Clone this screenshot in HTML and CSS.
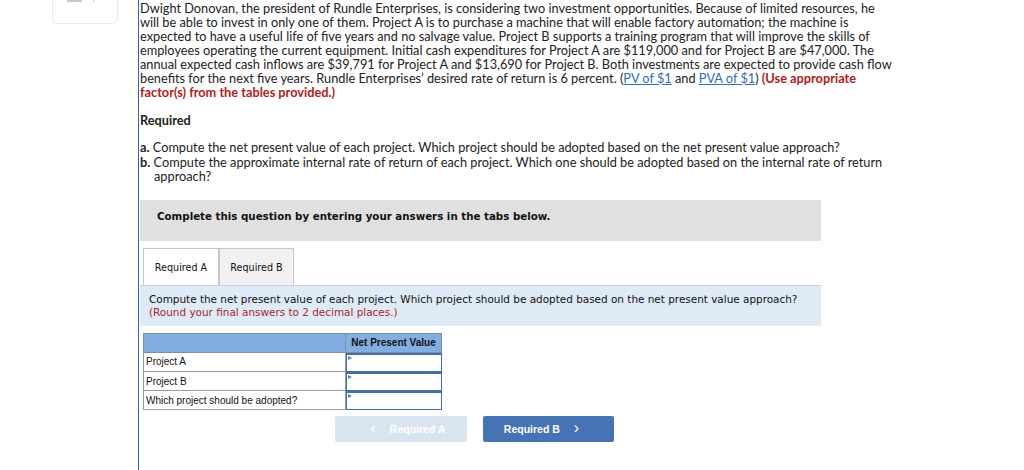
FILE: index.html
```html
<!DOCTYPE html>
<html>
<head>
<meta charset="utf-8">
<link rel="stylesheet" href="styles.css">
</head>
<body>
<div class="page">
  <div class="side">
    <div class="card"><span class="mark1"></span><span class="mark2"></span></div>
  </div>
  <div class="main">
    <p class="intro">Dwight Donovan, the president of Rundle Enterprises, is considering two investment opportunities. Because of limited resources, he<br>will be able to invest in only one of them. Project A is to purchase a machine that will enable factory automation; the machine is<br>expected to have a useful life of five years and no salvage value. Project B supports a training program that will improve the skills of<br>employees operating the current equipment. Initial cash expenditures for Project A are $119,000 and for Project B are $47,000. The<br>annual expected cash inflows are $39,791 for Project A and $13,690 for Project B. Both investments are expected to provide cash flow<br>benefits for the next five years. Rundle Enterprises’ desired rate of return is 6 percent. (<a class="lnk">PV of $1</a> and <a class="lnk">PVA of $1</a>) <b class="red">(Use appropriate<br>factor(s) from the tables provided.)</b></p>
    <p class="req">Required</p>
    <ol class="parts">
      <li><b>a.</b> Compute the net present value of each project. Which project should be adopted based on the net present value approach?</li>
      <li><b>b.</b> Compute the approximate internal rate of return of each project. Which one should be adopted based on the internal rate of return<br><span class="indent">approach?</span></li>
    </ol>
    <div class="complete">Complete this question by entering your answers in the tabs below.</div>
    <div class="tabs">
      <div class="tab active">Required A</div>
      <div class="tab">Required B</div>
    </div>
    <div class="instr">
      <div>Compute the net present value of each project. Which project should be adopted based on the net present value approach?</div>
      <div class="red2">(Round your final answers to 2 decimal places.)</div>
    </div>
    <table class="grid">
      <tr class="head"><th class="lab"></th><th class="val">Net Present Value</th></tr>
      <tr><td class="lab">Project A</td><td class="val"><div class="inp"><span class="tri"></span></div></td></tr>
      <tr><td class="lab">Project B</td><td class="val"><div class="inp"><span class="tri"></span></div></td></tr>
      <tr><td class="lab">Which project should be adopted?</td><td class="val"><div class="inp"><span class="tri"></span></div></td></tr>
    </table>
    <div class="nav">
      <div class="btn prev"><span class="chev">&lsaquo;</span>Required A</div>
      <div class="btn next">Required B<span class="chev">&rsaquo;</span></div>
    </div>
  </div>
</div>
</body>
</html>
```
FILE: styles.css
```css
html, body { margin: 0; padding: 0; background: #fff; }
body { width: 1024px; height: 470px; overflow: hidden; }
.page { display: flex; height: 470px; }
.side { width: 138px; flex: none; position: relative; }
.card {
  margin-left: 52px; margin-top: -10px; width: 64px; height: 32px;
  border: 1px solid #ebebeb; border-radius: 0 0 6px 6px; position: relative;
}
.mark1 { position: absolute; left: 14px; top: 9px; width: 15px; height: 2px; background: #c8c8c8; }
.mark2 { position: absolute; left: 40px; top: 9px; width: 1px; height: 2px; background: #c8c8c8; }
.main {
  border-left: 1.5px solid #2f64b5; flex: 1; padding-left: 1px;
  font-family: Lato, "Open Sans", sans-serif; color: #222;
}
.intro { margin: 0; padding-top: 1px; font-size: 12.75px; line-height: 14px; white-space: nowrap; }
.lnk { color: #2e6dbd; text-decoration: underline; }
.red { color: #b01c20; font-weight: 700; }
.req { margin: 14px 0 0; font-weight: 700; font-size: 12.75px; line-height: 14px; }
.parts { list-style: none; margin: 13px 0 0; padding: 0; font-size: 12.75px; line-height: 14.5px; white-space: nowrap; }
.indent { padding-left: 14px; }
.complete {
  margin-top: 16px; width: 681px; height: 41px; box-sizing: border-box;
  background: #e0e0e0; padding: 10px 0 0 17px;
  font-family: "DejaVu Sans", Verdana, sans-serif; font-weight: 700; font-size: 10.27px; color: #111;
}
.tabs { display: flex; margin-top: 7px; margin-left: 3px; height: 37px; }
.tab {
  width: 75px; box-sizing: border-box; border: 1px solid #c8c8c8; border-bottom: none;
  background: #f1f1f1; font-family: "DejaVu Sans", Tahoma, sans-serif; font-size: 9.6px; color: #111;
  display: flex; align-items: center; justify-content: center; padding-top: 1px;
}
.tab.active { background: #fff; width: 76px; }
.instr {
  width: 681px; height: 41px; box-sizing: border-box; background: #dfeaf7;
  border-top: 1px solid #c9d0d8; padding: 7px 0 0 9px;
  font-family: "DejaVu Sans", Tahoma, sans-serif; font-size: 10.45px; line-height: 13px; color: #111;
}
.red2 { color: #a6262a; }
.grid { border-collapse: collapse; margin: 7px 0 0 3px; font-family: "Liberation Sans", Arial, sans-serif; font-size: 10px; color: #111; }
.grid td, .grid th { padding: 0; }
.grid .lab { width: 199px; }
.grid .val { width: 95px; }
.head th { background: #84ade1; height: 18px; border: 1px solid #7a8fa8; font-weight: 700; font-size: 10px; }
.grid td.lab { height: 18px; border-left: 1px solid #999; border-bottom: 1px solid #999; padding-left: 2px; }
.grid td.val { border-left: 1px solid #999; }
.inp { height: 16px; border: 1.5px solid #466da8; border-top-width: 2px; background: #fff; position: relative; margin-top: 0; }
.tri { position: absolute; left: 1px; top: 1px; width: 0; height: 0; border-left: 4px solid #4e7fc4; border-top: 2.5px solid transparent; border-bottom: 2.5px solid transparent; }
.nav { display: flex; gap: 16px; margin: 6px 0 0 195px; }
.btn {
  width: 132px; height: 26px; border-radius: 2px; display: flex; align-items: center; justify-content: center;
  font-family: "Liberation Sans", Arial, sans-serif; font-weight: 700; font-size: 10.5px; color: #fff;
}
.prev { background: #d9e4f1; }
.next { background: #4673b3; width: 131px; }
.chev { font-size: 16px; font-weight: 400; line-height: 1; margin: -2px 14px 0; }
```
